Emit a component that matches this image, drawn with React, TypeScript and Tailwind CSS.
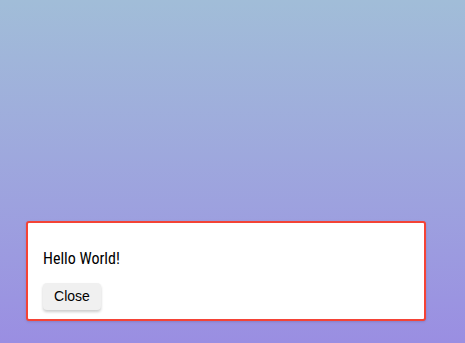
import { useState } from "react";

const App = () => {
  const [open, setOpen] = useState(true);

  return (
    <div className="flex h-[343px] w-full flex-col justify-end bg-gradient-to-b from-[#a1bdd8] to-[#9a8ee2] pb-[22px] pl-[26px]">
      {open && (
        <div className="flex h-[100px] w-[400px] flex-col rounded-[3px] border-2 border-[#f44336] bg-white px-[15px] pt-[24px] shadow-sm">
          <p className="font-['Roboto_Condensed',Roboto,sans-serif] text-[16px] leading-[24px] text-black">
            Hello World!
          </p>
          <div className="mt-[12px]">
            <button
              onClick={() => setOpen(false)}
              className="h-[27px] w-[58px] rounded-[4px] bg-[#f0f0f0] font-['Liberation_Sans',Arial,sans-serif] text-[14px] text-black shadow-[0_2px_3px_rgba(0,0,0,0.2)]"
            >
              Close
            </button>
          </div>
        </div>
      )}
    </div>
  );
};

export default App;
